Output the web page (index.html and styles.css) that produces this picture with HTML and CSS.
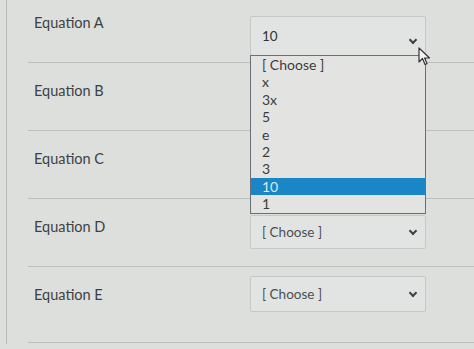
FILE: index.html
```html
<!DOCTYPE html>
<html>
<head>
<meta charset="utf-8">
<link rel="stylesheet" href="styles.css">
</head>
<body>
<div class="frame">
  <div class="topline"></div>
  <div class="rows">
    <div class="row first">
      <div class="label">Equation A</div>
      <div class="select"><span class="value">10</span><span class="chev"></span></div>
    </div>
    <div class="row">
      <div class="label">Equation B</div>
      <div class="select covered"><span class="value">[ Choose ]</span><span class="chev"></span></div>
    </div>
    <div class="row">
      <div class="label">Equation C</div>
      <div class="select covered"><span class="value">[ Choose ]</span><span class="chev"></span></div>
    </div>
    <div class="row">
      <div class="label">Equation D</div>
      <div class="select"><span class="value">[ Choose ]</span><span class="chev"></span></div>
    </div>
    <div class="row tall">
      <div class="label">Equation E</div>
      <div class="select"><span class="value">[ Choose ]</span><span class="chev"></span></div>
    </div>
  </div>
</div>
<ul class="dropdown">
  <li>[ Choose ]</li>
  <li>x</li>
  <li>3x</li>
  <li>5</li>
  <li>e</li>
  <li>2</li>
  <li>3</li>
  <li class="active">10</li>
  <li>1</li>
</ul>
<svg class="cursor" width="14" height="20" viewBox="0 0 14 20">
  <path d="M1 1 L1 15 L4.5 11.5 L7 17.5 L9 16.6 L6.6 11 L11.5 11 Z" fill="#f4f4f4" stroke="#333" stroke-width="1.2" stroke-linejoin="round"/>
</svg>
</body>
</html>
```

FILE: styles.css
```css
html, body {
  margin: 0;
  padding: 0;
}
body {
  width: 474px;
  height: 349px;
  overflow: hidden;
  background: #dcdfdc;
  font-family: Lato, "Open Sans", sans-serif;
  position: relative;
}
.frame {
  margin-left: 6px;
  border-left: 1px solid #b7bab8;
  height: 349px;
  position: relative;
}
.topline {
  position: absolute;
  left: 208px;
  right: 0;
  top: 0;
  height: 2px;
  background: #c4c7c5;
}
.rows {
  padding-left: 21px;
}
.row {
  height: 67px;
  border-bottom: 1px solid #bcbfbd;
  display: flex;
  align-items: flex-start;
}
.row.first {
  margin-top: -5px;
}
.row.tall {
  height: 75px;
}
.label {
  width: 222px;
  box-sizing: border-box;
  padding-left: 6px;
  padding-top: 19px;
  font-size: 14.5px;
  line-height: 18px;
  color: #3c4144;
}
.select {
  margin-top: 16px;
  width: 176px;
  height: 34px;
  border: 1px solid #c5c8c6;
  background: #e1e4e2;
  border-radius: 2px;
  display: flex;
  align-items: center;
  justify-content: space-between;
  padding: 0 9px 0 11px;
  box-sizing: border-box;
}
.row.first .select {
  margin-top: 21px;
  height: 40px;
}
.row.tall .select {
  margin-top: 9px;
  height: 36px;
}
.select.covered .value {
  visibility: hidden;
}
.value {
  font-size: 13.5px;
  color: #4a4f52;
}
.row.first .value {
  color: #333;
}
.chev {
  width: 4px;
  height: 4px;
  border-right: 2px solid #3d4245;
  border-bottom: 2px solid #3d4245;
  transform: rotate(45deg);
  margin-top: -2px;
}
.row.first .chev {
  margin-top: 8px;
}
.dropdown {
  position: absolute;
  left: 250px;
  top: 55px;
  width: 176px;
  margin: 0;
  padding: 0;
  list-style: none;
  border: 1px solid #6b7078;
  background: #e3e4e1;
  box-sizing: border-box;
}
.dropdown li {
  height: 17.4px;
  line-height: 17.4px;
  padding-left: 11px;
  font-size: 14px;
  color: #3a3d40;
}
.dropdown li.active {
  background: #1b86c6;
  color: #dceaf4;
}
.cursor {
  position: absolute;
  left: 418px;
  top: 47px;
}
```
